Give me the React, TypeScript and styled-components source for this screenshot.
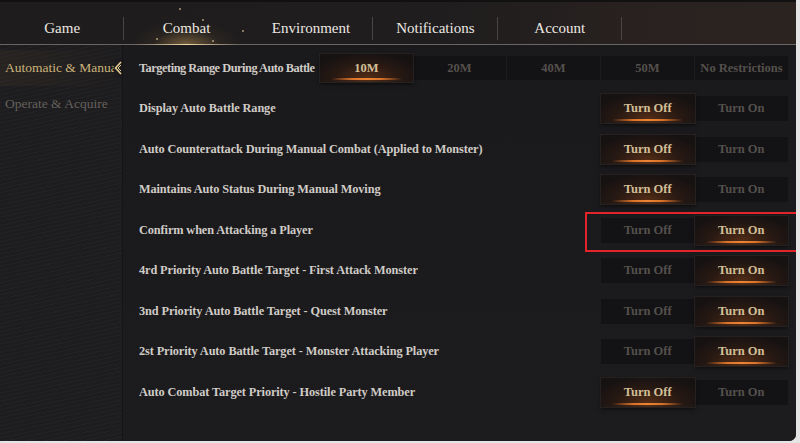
import React from "react";
import styled, { createGlobalStyle, css } from "styled-components";

const Global = createGlobalStyle`
  html, body { margin: 0; padding: 0; background: #e4e4e4; }
  body { font-family: "Liberation Serif", "DejaVu Serif", serif; }
  * { box-sizing: border-box; }
`;

const Frame = styled.div`
  width: 796px;
  height: 441px;
  background: #1b1a1c;
  border-bottom-right-radius: 7px;
  overflow: hidden;
  display: flex;
  flex-direction: column;
`;

const TopBar = styled.div`
  height: 45px;
  flex: none;
  display: flex;
  align-items: stretch;
  border-top: 2px solid #121112;
  border-bottom: 1px solid #6a6562;
  background: linear-gradient(90deg, #1e1c1d 0%, #1f1d1e 55%, #2a2220 85%, #2a2320 100%);
  position: relative;
`;

const Tab = styled.div<{ $active?: boolean; $sep?: boolean }>`
  width: 124.4px;
  flex: none;
  display: flex;
  align-items: center;
  justify-content: center;
  font-size: 15px;
  color: #ece8e2;
  position: relative;
  padding-top: 11px;
  ${(p) =>
    p.$sep &&
    css`
      &::after {
        content: "";
        position: absolute;
        right: 0;
        top: 15px;
        height: 23px;
        width: 1px;
        background: #4a4542;
      }
    `}
  ${(p) =>
    p.$active &&
    css`
      background: radial-gradient(ellipse 55px 22px at 50% 100%, rgba(214, 168, 96, 0.45), rgba(120, 90, 50, 0.12) 60%, rgba(0,0,0,0) 100%);
      &::before {
        content: "";
        position: absolute;
        left: 10px;
        right: 10px;
        bottom: -1px;
        height: 1px;
        background: linear-gradient(90deg, rgba(255,220,150,0), #f1d9a8 50%, rgba(255,220,150,0));
      }
    `}
`;

const Spark = styled.span`
  position: absolute;
  width: 2px;
  height: 2px;
  border-radius: 50%;
  background: #e8cf9a;
  opacity: 0.7;
`;

const Body = styled.div`
  flex: 1;
  display: flex;
  min-height: 0;
`;

const Sidebar = styled.div`
  width: 123px;
  flex: none;
  display: flex;
  flex-direction: column;
  padding-top: 5px;
  background:
    repeating-linear-gradient(168deg, rgba(255,255,255,0.025) 0px, rgba(255,255,255,0.025) 1px, rgba(0,0,0,0) 1px, rgba(0,0,0,0) 4px),
    #1d1c1e;
  border-right: 1px solid #151416;
`;

const SideItem = styled.div<{ $active?: boolean }>`
  height: 36px;
  display: flex;
  align-items: center;
  padding-left: 5px;
  font-size: 13.5px;
  white-space: nowrap;
  overflow: hidden;
  position: relative;
  color: ${(p) => (p.$active ? "#cbb37a" : "#65615d")};
  background: ${(p) =>
    p.$active
      ? "linear-gradient(90deg, rgba(60,50,40,0.35), rgba(30,28,28,0.1))"
      : "transparent"};
`;

const Chevron = styled.span`
  position: absolute;
  right: 0;
  top: 50%;
  transform: translateY(-50%);
  width: 8px;
  height: 20px;
  display: flex;
  align-items: center;
  justify-content: center;
  background: #1b1a1c;
`;

const Content = styled.div`
  flex: 1;
  min-width: 0;
  display: flex;
  flex-direction: column;
  padding-top: 3px;
  background: linear-gradient(180deg, #1a191b 0%, #1b1a1c 60%, #1c1b1e 100%);
`;

const Row = styled.div`
  height: 40.5px;
  display: flex;
  align-items: center;
  padding-left: 16px;
  position: relative;
`;

const Label = styled.div<{ $tight?: boolean }>`
  flex: 1;
  min-width: 0;
  font-size: 12.3px;
  font-weight: bold;
  color: #cfcbc6;
  white-space: nowrap;
  letter-spacing: ${(p) => (p.$tight ? "-0.45px" : "-0.1px")};
`;

const Segments = styled.div<{ $width: number; $height: number }>`
  width: ${(p) => p.$width}px;
  height: ${(p) => p.$height}px;
  flex: none;
  display: flex;
  background: #131214;
  margin-right: 8px;
  position: relative;
`;

const Seg = styled.div<{ $active?: boolean; $divider?: boolean }>`
  flex: 1;
  display: flex;
  align-items: center;
  justify-content: center;
  font-size: 12.5px;
  font-weight: bold;
  white-space: nowrap;
  color: #54504d;
  position: relative;
  ${(p) =>
    p.$divider &&
    css`
      border-left: 1px solid #1e1c1e;
    `}
  ${(p) =>
    p.$active &&
    css`
      margin: -2px 0;
      color: #d2bf96;
      background:
        radial-gradient(ellipse 60% 90% at 50% 85%, rgba(110, 56, 24, 0.7), rgba(55, 30, 18, 0.6) 55%, rgba(22, 18, 18, 0.95) 100%);
      box-shadow: 0 0 0 1px #252120, 0 2px 4px rgba(0,0,0,0.6);
      z-index: 1;
      &::after {
        content: "";
        position: absolute;
        left: 12%;
        right: 12%;
        bottom: 2px;
        height: 2px;
        background: linear-gradient(90deg, rgba(230,120,40,0), #d8732a 30%, #ec8534 50%, #d8732a 70%, rgba(230,120,40,0));
        filter: blur(0.4px);
      }
    `}
`;

const Highlight = styled.div`
  position: absolute;
  left: 462px;
  top: 2px;
  width: 214px;
  height: 40px;
  border: 2px solid #e3242b;
  pointer-events: none;
  z-index: 2;
`;

const TabSparks = () => (
  <>
    <Spark style={{ left: 55, top: 6 }} />
    <Spark style={{ left: 78, top: 17 }} />
    <Spark style={{ left: 32, top: 36 }} />
    <Spark style={{ left: 88, top: 38 }} />
    <Spark style={{ left: 118, top: 28 }} />
  </>
);

type Setting = { label: string; on: boolean; highlight?: boolean };

const settings: Setting[] = [
  { label: "Display Auto Battle Range", on: false },
  { label: "Auto Counterattack During Manual Combat (Applied to Monster)", on: false },
  { label: "Maintains Auto Status During Manual Moving", on: false },
  { label: "Confirm when Attacking a Player", on: true, highlight: true },
  { label: "4rd Priority Auto Battle Target - First Attack Monster", on: true },
  { label: "3nd Priority Auto Battle Target - Quest Monster", on: true },
  { label: "2st Priority Auto Battle Target - Monster Attacking Player", on: true },
  { label: "Auto Combat Target Priority - Hostile Party Member", on: false },
];

const tabs = ["Game", "Combat", "Environment", "Notifications", "Account"];
const ranges = ["10M", "20M", "40M", "50M", "No Restrictions"];

export default function App() {
  return (
    <>
      <Global />
      <Frame>
        <TopBar>
          {tabs.map((t, i) => (
            <Tab key={t} $active={i === 1} $sep={i !== 1}>
              {i === 1 && <TabSparks />}
              {t}
            </Tab>
          ))}
        </TopBar>
        <Body>
          <Sidebar>
            <SideItem $active>
              Automatic &amp; Manual
              <Chevron>
                <svg width="8" height="14" viewBox="0 0 8 14">
                  <path d="M7 1 L1.5 7 L7 13" fill="none" stroke="#e6cf95" strokeWidth="1.6" />
                  <path d="M7 4 L4 7 L7 10" fill="none" stroke="#e6cf95" strokeWidth="1" />
                </svg>
              </Chevron>
            </SideItem>
            <SideItem>Operate &amp; Acquire</SideItem>
          </Sidebar>
          <Content>
            <Row>
              <Label $tight>Targeting Range During Auto Battle</Label>
              <Segments $width={468} $height={24}>
                {ranges.map((r, i) => (
                  <Seg key={r} $active={i === 0} $divider={i > 1}>
                    {r}
                  </Seg>
                ))}
              </Segments>
            </Row>
            {settings.map((s) => (
              <Row key={s.label}>
                <Label>{s.label}</Label>
                <Segments $width={187} $height={25}>
                  <Seg $active={!s.on}>Turn Off</Seg>
                  <Seg $active={s.on}>Turn On</Seg>
                </Segments>
                {s.highlight && <Highlight />}
              </Row>
            ))}
          </Content>
        </Body>
      </Frame>
    </>
  );
}
